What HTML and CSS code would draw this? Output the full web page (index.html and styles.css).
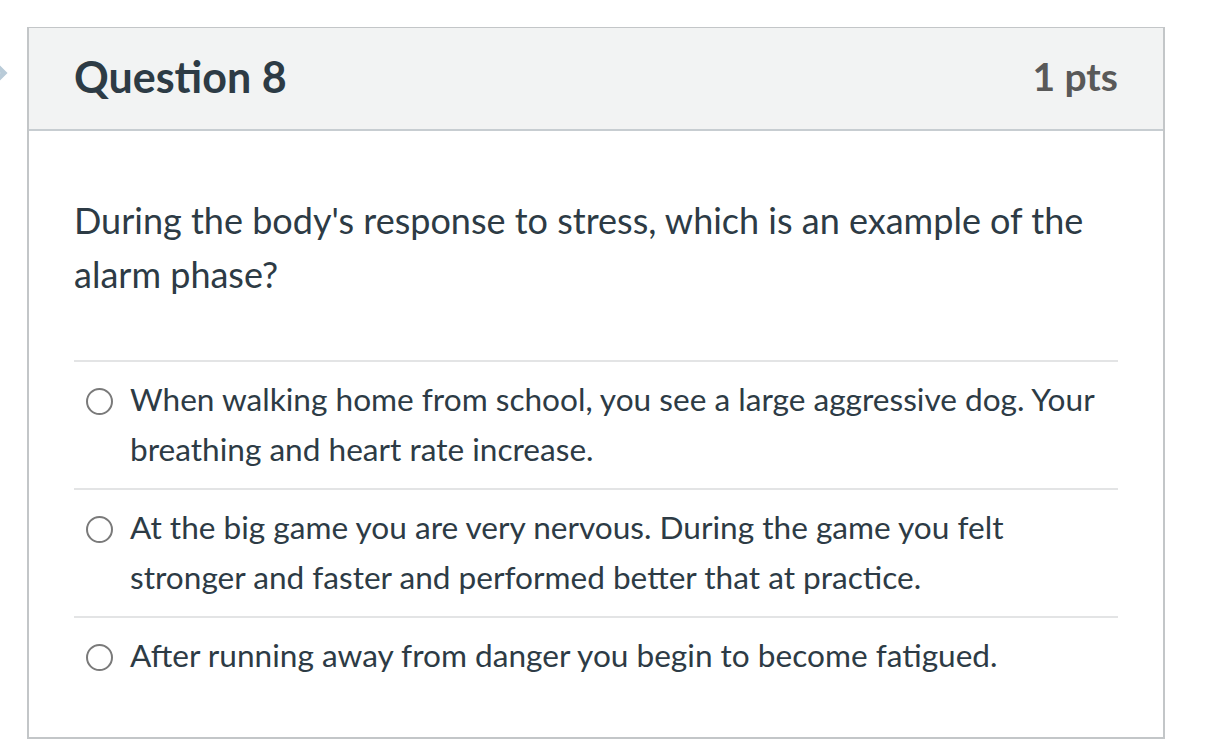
FILE: index.html
```html
<!DOCTYPE html>
<html>
<head>
<meta charset="utf-8">
<link rel="stylesheet" href="styles.css">
</head>
<body>
<svg class="nav-arrow" width="12" height="30" viewBox="0 0 12 30"><path d="M-8 3 L4 15 L-8 27" fill="none" stroke="#b9cbd8" stroke-width="5"/></svg>
<div class="card">
  <div class="header">
    <h2 class="title">Question 8</h2>
    <span class="pts">1 pts</span>
  </div>
  <div class="body">
    <p class="question">During the body's response to stress, which is an example of the alarm phase?</p>
    <div class="answers">
      <label class="answer"><span class="radio"></span><span class="atext">When walking home from school, you see a large aggressive dog. Your breathing and heart rate increase.</span></label>
      <label class="answer"><span class="radio"></span><span class="atext">At the big game you are very nervous. During the game you felt stronger and faster and performed better that at practice.</span></label>
      <label class="answer"><span class="radio"></span><span class="atext">After running away from danger you begin to become fatigued.</span></label>
    </div>
  </div>
</div>
</body>
</html>
```
FILE: styles.css
```css
html, body { margin: 0; padding: 0; background: #fff; }
body {
  font-family: Lato, "Open Sans", sans-serif;
  color: #2d3b45;
  padding: 27px 0 0 27px;
  position: relative;
  width: 1208px;
  height: 748px;
  box-sizing: border-box;
  overflow: hidden;
}
.nav-arrow { position: absolute; left: 0; top: 58px; }
.card {
  width: 1138px;
  height: 712px;
  box-sizing: border-box;
  border: 2px solid #c3c6c8;
  border-top-width: 1px;
}
.header {
  height: 103px;
  box-sizing: border-box;
  background: #f2f3f3;
  border-bottom: 2px solid #c7cdd1;
  display: flex;
  align-items: center;
  justify-content: space-between;
  padding: 0 45px 5px 45px;
}
.title {
  margin: 0;
  font-size: 43px;
  font-weight: 700;
  color: #2d3b45;
}
.pts {
  font-size: 39px;
  font-weight: 700;
  color: #595959;
}
.body { padding: 62px 45px 0 45px; }
.question {
  margin: 0;
  font-size: 36px;
  line-height: 54px;
}
.answers { margin-top: 59px; }
.answer {
  display: flex;
  align-items: flex-start;
  border-top: 2px solid #e3e4e5;
  padding: 12px 0 14px 0;
  font-size: 31.6px;
  line-height: 50px;
}
.radio {
  flex: none;
  width: 23px;
  height: 23px;
  border: 2px solid #7a7a7a;
  border-radius: 50%;
  margin: 14px 17px 0 12px;
}
.atext { flex: 1; }
```
